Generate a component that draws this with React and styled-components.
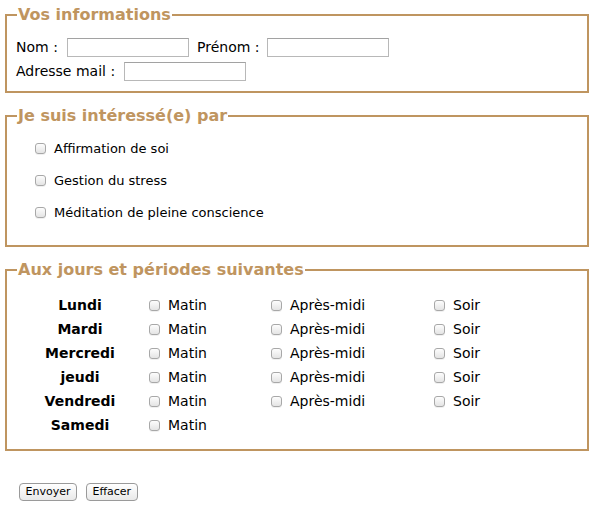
import React from "react";
import styled, { createGlobalStyle } from "styled-components";

const GOLD = "#bf9560";

const Global = createGlobalStyle`
  html, body { margin: 0; padding: 0; background: #fff; }
  body { font-family: "DejaVu Sans", Verdana, sans-serif; color: #000; }
`;

const Page = styled.form`
  padding: 5px 5px 0 5px;
`;

const Fieldset = styled.fieldset`
  margin: 0 0 13px;
  padding: ${(p) => p.$pad};
  border: 2px solid ${GOLD};
  min-width: 0;
`;

const Legend = styled.legend`
  margin-left: 2px;
  padding: 0 1px;
  font: bold 16px/20px "DejaVu Sans", Verdana, sans-serif;
  color: ${GOLD};
`;

const FieldRow = styled.div`
  display: flex;
  align-items: center;
  height: 24px;
  font-size: 14px;
`;

const FieldLabel = styled.label`
  width: ${(p) => p.$w}px;
  margin-left: ${(p) => p.$ml || 0}px;
  padding-left: 1px;
  box-sizing: border-box;
  white-space: nowrap;
`;

const TextInput = styled.input`
  width: 122px;
  height: 19px;
  box-sizing: border-box;
  margin: 0;
  padding: 1px 3px;
  border: 1px solid #b8b8b8;
  border-top-color: #a2a2a2;
  background: #fff;
  font: 13px "DejaVu Sans", sans-serif;
`;

const Check = styled.input.attrs({ type: "checkbox" })`
  appearance: none;
  -webkit-appearance: none;
  width: 11px;
  height: 11px;
  margin: 0;
  flex: none;
  border: 1px solid #a8a8a8;
  border-radius: 3px;
  background: linear-gradient(#fdfdfd, #e4e4e4);
  box-shadow: 0 1px 0 rgba(0, 0, 0, 0.06);
`;

const InterestRow = styled.label`
  display: flex;
  align-items: center;
  gap: 8px;
  height: 32px;
  padding-left: 20px;
  font-size: 13px;
`;

const DaysGrid = styled.div`
  display: grid;
  grid-template-columns: 130px 122px 163px 1fr;
  grid-auto-rows: 24px;
  align-items: center;
  font-size: 14px;
`;

const Day = styled.div`
  text-align: center;
  font-weight: bold;
  grid-column: 1;
`;

const Option = styled.label`
  display: flex;
  align-items: center;
  gap: 8px;
  padding-left: 4px;
  grid-column: ${(p) => p.$col};
`;

const Actions = styled.div`
  display: flex;
  gap: 9px;
  padding: 19px 0 0 14px;
`;

const Button = styled.button`
  height: 18px;
  box-sizing: border-box;
  padding: 0 5.5px;
  margin: 0;
  border: 1px solid #9a9a9a;
  border-radius: 4px;
  background: linear-gradient(#ffffff, #e9e9e9);
  font: 11px/14px "DejaVu Sans", Verdana, sans-serif;
  color: #000;
`;

const interests = [
  "Affirmation de soi",
  "Gestion du stress",
  "Méditation de pleine conscience",
];

const days = [
  { name: "Lundi", full: true },
  { name: "Mardi", full: true },
  { name: "Mercredi", full: true },
  { name: "jeudi", full: true },
  { name: "Vendredi", full: true },
  { name: "Samedi", full: false },
];

export default function App() {
  return (
    <>
      <Global />
      <Page onSubmit={(e) => e.preventDefault()}>
        <Fieldset $pad="10px 8px 8px">
          <Legend>Vos informations</Legend>
          <FieldRow>
            <FieldLabel $w={52}>Nom :</FieldLabel>
            <TextInput type="text" />
            <FieldLabel $w={71} $ml={7}>Prénom :</FieldLabel>
            <TextInput type="text" />
          </FieldRow>
          <FieldRow>
            <FieldLabel $w={109}>Adresse mail :</FieldLabel>
            <TextInput type="text" />
          </FieldRow>
        </Fieldset>

        <Fieldset $pad="6px 8px 17px">
          <Legend>Je suis intéressé(e) par</Legend>
          {interests.map((t) => (
            <InterestRow key={t}>
              <Check />
              <span>{t}</span>
            </InterestRow>
          ))}
        </Fieldset>

        <Fieldset $pad="13px 8px 12px">
          <Legend>Aux jours et périodes suivantes</Legend>
          <DaysGrid>
            {days.map((d) => (
              <React.Fragment key={d.name}>
                <Day>{d.name}</Day>
                <Option $col={2}>
                  <Check />
                  <span>Matin</span>
                </Option>
                {d.full && (
                  <>
                    <Option $col={3}>
                      <Check />
                      <span>Après-midi</span>
                    </Option>
                    <Option $col={4}>
                      <Check />
                      <span>Soir</span>
                    </Option>
                  </>
                )}
              </React.Fragment>
            ))}
          </DaysGrid>
        </Fieldset>

        <Actions>
          <Button type="submit">Envoyer</Button>
          <Button type="reset">Effacer</Button>
        </Actions>
      </Page>
    </>
  );
}
